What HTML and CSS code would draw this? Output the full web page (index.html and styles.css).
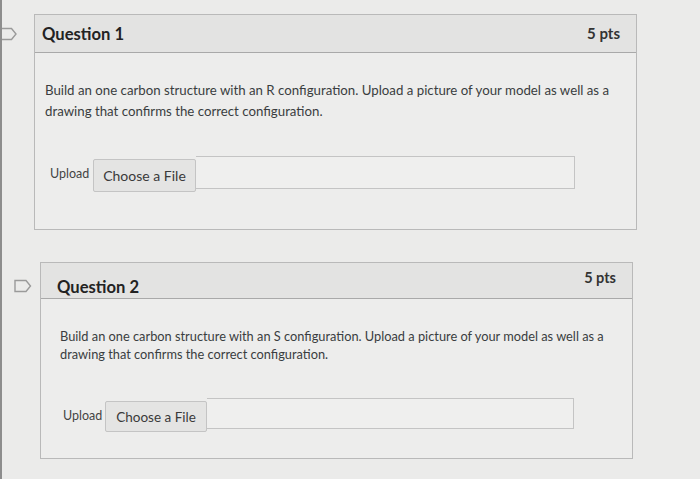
FILE: index.html
```html
<!DOCTYPE html>
<html>
<head>
<meta charset="utf-8">
<link rel="stylesheet" href="styles.css">
</head>
<body>
<div class="page">
  <div class="qrow q1">
    <svg class="flag" width="18" height="14" viewBox="0 0 18 14"><path d="M-4 1.5 H11.5 L16 7 L11.5 12.5 H-4 Z" fill="none" stroke="#9a9a9a" stroke-width="1.4"/></svg>
    <div class="card">
      <div class="head">
        <span class="title">Question 1</span>
        <span class="pts">5 pts</span>
      </div>
      <div class="body">
        <p class="text">Build an one carbon structure with an R configuration. Upload a picture of your model as well as a drawing that confirms the correct configuration.</p>
        <div class="upload">
          <span class="label">Upload</span>
          <div class="file">
            <span class="btn">Choose a File</span>
            <span class="field"></span>
          </div>
        </div>
      </div>
    </div>
  </div>
  <div class="qrow q2">
    <svg class="flag" width="18" height="14" viewBox="0 0 18 14"><path d="M1 1.5 H12 L16.5 7 L12 12.5 H1 Z" fill="none" stroke="#9a9a9a" stroke-width="1.4"/></svg>
    <div class="card">
      <div class="head">
        <span class="title">Question 2</span>
        <span class="pts">5 pts</span>
      </div>
      <div class="body">
        <p class="text">Build an one carbon structure with an S configuration. Upload a picture of your model as well as a drawing that confirms the correct configuration.</p>
        <div class="upload">
          <span class="label">Upload</span>
          <div class="file">
            <span class="btn">Choose a File</span>
            <span class="field"></span>
          </div>
        </div>
      </div>
    </div>
  </div>
</div>
</body>
</html>
```
FILE: styles.css
```css
html, body {
  margin: 0;
  padding: 0;
}
body {
  background: #ebebea;
  font-family: Lato, "Open Sans", sans-serif;
  color: #2f3336;
  width: 700px;
  height: 479px;
  overflow: hidden;
  border-left: 2px solid #8d8d8d;
  box-sizing: border-box;
}
.page {
  padding-top: 14px;
}
.qrow {
  display: flex;
  align-items: flex-start;
}
.flag {
  flex: none;
}
.card {
  border: 1px solid #b9b9b9;
  background: #ededec;
}
.head {
  display: flex;
  justify-content: space-between;
  background: #e3e3e2;
  border-bottom: 1px solid #a9a9a9;
}
.title {
  font-weight: 700;
  font-size: 16.6px;
  color: #222;
}
.pts {
  font-weight: 700;
  font-size: 15px;
  color: #333;
}
.text {
  margin: 0;
  font-size: 13.25px;
  color: #3a3d40;
}
.upload {
  display: flex;
  align-items: center;
}
.label {
  font-size: 12.5px;
  color: #444;
}
.file {
  display: flex;
  align-items: flex-start;
}
.btn {
  display: flex;
  align-items: center;
  justify-content: center;
  background: #e4e4e3;
  border: 1px solid #c4c4c4;
  border-radius: 2px;
  color: #3a3a3a;
  box-sizing: border-box;
}
.field {
  display: block;
  border: 1px solid #c4c4c4;
  border-left: none;
  background: #efefee;
  box-sizing: border-box;
  margin-top: -3px;
}

/* Question 1 */
.q1 .flag {
  margin: 13px 16px 0 -2px;
}
.q1 .card {
  width: 603px;
  height: 216px;
  box-sizing: border-box;
}
.q1 .head {
  height: 38px;
  box-sizing: border-box;
  padding: 9px 15px 0 7px;
}
.q1 .pts {
  padding-top: 0;
  margin-right: 1px;
}
.q1 .body {
  padding: 27px 0 0 10px;
}
.q1 .text {
  line-height: 21px;
  width: 575px;
}
.q1 .upload {
  margin-top: 37px;
  padding-left: 5px;
}
.q1 .label {
  width: 43px;
  margin-top: -4px;
}
.q1 .btn {
  width: 103px;
  height: 33px;
  font-size: 14px;
}
.q1 .field {
  width: 379px;
  height: 33px;
}

/* Question 2 */
.q2 {
  margin-top: 32px;
}
.q2 .flag {
  margin: 17px 8px 0 12px;
}
.q2 .card {
  width: 593px;
  height: 197px;
  box-sizing: border-box;
}
.q2 .head {
  height: 36px;
  box-sizing: border-box;
  padding: 0 16px 0 16px;
  align-items: center;
}
.q2 .title {
  margin-top: 12px;
}
.q2 .pts {
  margin-top: -6px;
  font-size: 14.5px;
}
.q2 .body {
  padding: 28px 0 0 19px;
}
.q2 .text {
  font-size: 12.8px;
  line-height: 18px;
  width: 560px;
}
.q2 .upload {
  margin-top: 38px;
  padding-left: 3px;
}
.q2 .label {
  width: 42px;
  margin-top: -2px;
}
.q2 .btn {
  width: 102px;
  height: 31px;
  font-size: 13.5px;
}
.q2 .field {
  width: 367px;
  height: 31px;
}
```
